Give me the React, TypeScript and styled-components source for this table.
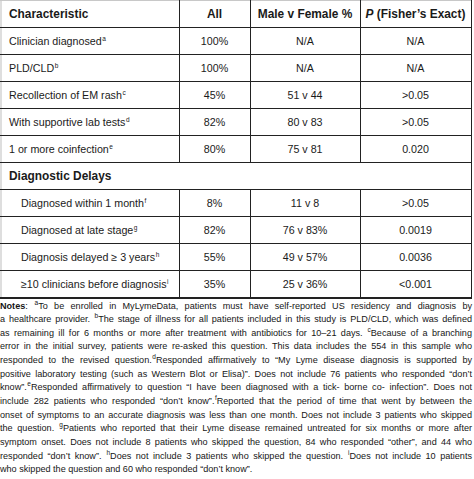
import styled, { createGlobalStyle } from "styled-components";

const GlobalStyle = createGlobalStyle`
  html, body {
    margin: 0;
    padding: 0;
    background: #fff;
  }
  body {
    font-family: "Liberation Sans", Arial, sans-serif;
    color: #1a1a1a;
  }
`;

type Row = {
  label: string;
  mark: string;
  all: string;
  mf: string;
  p: string;
  indent?: boolean;
};

const topRows: Row[] = [
  { label: "Clinician diagnosed", mark: "a", all: "100%", mf: "N/A", p: "N/A" },
  { label: "PLD/CLD", mark: "b", all: "100%", mf: "N/A", p: "N/A" },
  { label: "Recollection of EM rash", mark: "c", all: "45%", mf: "51 v 44", p: ">0.05" },
  { label: "With supportive lab tests", mark: "d", all: "82%", mf: "80 v 83", p: ">0.05" },
  { label: "1 or more coinfection", mark: "e", all: "80%", mf: "75 v 81", p: "0.020" },
];

const delayRows: Row[] = [
  { label: "Diagnosed within 1 month", mark: "f", all: "8%", mf: "11 v 8", p: ">0.05", indent: true },
  { label: "Diagnosed at late stage", mark: "g", all: "82%", mf: "76 v 83%", p: "0.0019", indent: true },
  { label: "Diagnosis delayed ≥ 3 years", mark: "h", all: "55%", mf: "49 v 57%", p: "0.0036", indent: true },
  { label: "≥10 clinicians before diagnosis", mark: "i", all: "35%", mf: "25 v 36%", p: "<0.001", indent: true },
];

const App = () => {
  const renderRow = (row: Row) => (
    <tr key={row.label}>
      <LabelCell $indent={row.indent}>
        {row.label}
        <Sup>{row.mark}</Sup>
      </LabelCell>
      <ValueCell>{row.all}</ValueCell>
      <ValueCell>{row.mf}</ValueCell>
      <ValueCell>{row.p}</ValueCell>
    </tr>
  );

  return (
    <Page>
      <GlobalStyle />
      <Table>
        <colgroup>
          <col style={{ width: 179 }} />
          <col style={{ width: 71 }} />
          <col style={{ width: 110 }} />
          <col style={{ width: 111 }} />
        </colgroup>
        <thead>
          <tr>
            <HeadCell $left>Characteristic</HeadCell>
            <HeadCell>All</HeadCell>
            <HeadCell>Male v Female %</HeadCell>
            <HeadCell>
              <i>P</i> (Fisher’s Exact)
            </HeadCell>
          </tr>
        </thead>
        <tbody>
          {topRows.map(renderRow)}
          <tr>
            <SectionCell colSpan={4}>Diagnostic Delays</SectionCell>
          </tr>
          {delayRows.map(renderRow)}
        </tbody>
      </Table>
      <Notes>
        <NoteLine>
          <b>Notes</b>: <Sup>a</Sup>To be enrolled in MyLymeData, patients must have self-reported US residency and diagnosis by
        </NoteLine>
        <NoteLine>
          a healthcare provider. <Sup>b</Sup>The stage of illness for all patients included in this study is PLD/CLD, which was defined
        </NoteLine>
        <NoteLine>
          as remaining ill for 6 months or more after treatment with antibiotics for 10–21 days. <Sup>c</Sup>Because of a branching
        </NoteLine>
        <NoteLine>
          error in the initial survey, patients were re-asked this question. This data includes the 554 in this sample who
        </NoteLine>
        <NoteLine>
          responded to the revised question.<Sup>d</Sup>Responded affirmatively to “My Lyme disease diagnosis is supported by
        </NoteLine>
        <NoteLine>
          positive laboratory testing (such as Western Blot or Elisa)”. Does not include 76 patients who responded “don’t
        </NoteLine>
        <NoteLine>
          know”.<Sup>e</Sup>Responded affirmatively to question “I have been diagnosed with a tick- borne co- infection”. Does not
        </NoteLine>
        <NoteLine>
          include 282 patients who responded “don’t know”.<Sup>f</Sup>Reported that the period of time that went by between the
        </NoteLine>
        <NoteLine>
          onset of symptoms to an accurate diagnosis was less than one month. Does not include 3 patients who skipped
        </NoteLine>
        <NoteLine>
          the question. <Sup>g</Sup>Patients who reported that their Lyme disease remained untreated for six months or more after
        </NoteLine>
        <NoteLine>
          symptom onset. Does not include 8 patients who skipped the question, 84 who responded “other”, and 44 who
        </NoteLine>
        <NoteLine>
          responded “don’t know”. <Sup>h</Sup>Does not include 3 patients who skipped the question. <Sup>i</Sup>Does not include 10 patients
        </NoteLine>
        <NoteLine $last>who skipped the question and 60 who responded “don’t know”.</NoteLine>
      </Notes>
    </Page>
  );
};

export default App;

const Page = styled.div`
  width: 474px;
  height: 479px;
  overflow: hidden;
  background: #fff;
`;

const Table = styled.table`
  width: 471px;
  border-collapse: collapse;
  table-layout: fixed;
  border-top: 1px solid #c8c8c8;
  border-bottom: 2px solid #222;

  td, th {
    height: 27px;
    padding: 0;
    box-sizing: border-box;
    border-bottom: 1px solid #222;
    vertical-align: middle;
  }
  td + td, th + th {
    border-left: 1px solid #222;
  }
  tr > :first-child {
    background: linear-gradient(to right, #dedede 2px, transparent 2px);
  }
  tr > :last-child {
    border-right: 1px solid #222;
  }
`;

const HeadCell = styled.th<{ $left?: boolean }>`
  font-size: 11.9px;
  font-weight: bold;
  text-align: ${(p) => (p.$left ? "left" : "center")};
  padding-left: ${(p) => (p.$left ? "9px" : "0")} !important;
`;

const LabelCell = styled.td<{ $indent?: boolean }>`
  font-size: 10.7px;
  text-align: left;
  padding-left: ${(p) => (p.$indent ? "21px" : "9px")} !important;
`;

const ValueCell = styled.td`
  font-size: 10.7px;
  text-align: center;
`;

const SectionCell = styled.td`
  font-size: 11.9px;
  font-weight: bold;
  text-align: left;
  padding-left: 9px !important;
  border-right: 1px solid #222;
`;

const Sup = styled.sup`
  font-size: 6.5px;
  line-height: 0;
  vertical-align: 4px;
  margin-left: 0.5px;
`;

const Notes = styled.div`
  padding-top: 1px;
  width: 472px;
  font-size: 9.1px;
  line-height: 13.65px;
  color: #161616;
`;

const NoteLine = styled.div<{ $last?: boolean }>`
  text-align: ${(p) => (p.$last ? "left" : "justify")};
  text-align-last: ${(p) => (p.$last ? "left" : "justify")};
  white-space: normal;
`;
